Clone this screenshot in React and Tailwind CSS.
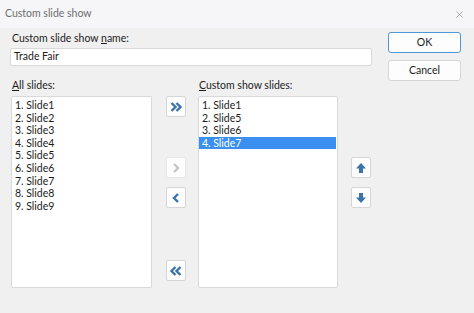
import { X } from 'lucide-react'

const ALL = ['1. Slide1', '2. Slide2', '3. Slide3', '4. Slide4', '5. Slide5', '6. Slide6', '7. Slide7', '8. Slide8', '9. Slide9']
const SHOW = ['1. Slide1', '2. Slide5', '3. Slide6', '4. Slide7']

const font = { fontFamily: 'Lato, "Noto Sans", sans-serif' }

function IconButton({ children, className = '' }) {
  return (
    <div className={`w-[20px] h-[21px] flex items-center justify-center bg-[#fdfdfd] border border-[#d6d6d6] rounded-[2px] ${className}`}>
      {children}
    </div>
  )
}

function Chevron({ dir = 'right', double = false, color = '#3b74aa' }) {
  const flip = dir === 'left' ? 'scale(-1,1) translate(-12,0)' : undefined
  return (
    <svg width="12" height="12" viewBox="0 0 12 12">
      <g transform={flip} fill="none" stroke={color} strokeWidth="2.4" strokeLinejoin="miter" strokeLinecap="butt">
        {double ? (
          <>
            <path d="M1.5 2 L5.5 6 L1.5 10" />
            <path d="M6.5 2 L10.5 6 L6.5 10" />
          </>
        ) : (
          <path d="M4 2 L8 6 L4 10" />
        )}
      </g>
    </svg>
  )
}

function Arrow({ down = false }) {
  return (
    <svg width="12" height="12" viewBox="0 0 12 12" style={down ? { transform: 'rotate(180deg)' } : undefined}>
      <path d="M6 1 L11 6.5 H8 V11 H4 V6.5 H1 Z" fill="#3b74aa" />
    </svg>
  )
}

function ListBox({ items, selected, width }) {
  return (
    <div className={`${width} h-[192px] bg-white border border-[#d9d9d9] rounded-[2px] pt-[2px]`}>
      {items.map((it, i) => (
        <div
          key={it}
          className={`h-[12.6px] leading-[12.6px] pl-[3px] mr-[1px] text-[10.5px] ${i === selected ? 'bg-[#3a8ff0] text-white' : 'text-[#1c1c1c]'}`}
        >
          {it}
        </div>
      ))}
    </div>
  )
}

export default function App() {
  return (
    <div className="w-[474px] h-[313px] bg-[#f0f0f0] overflow-hidden" style={font}>
      {/* title bar */}
      <div className="h-[28px] flex items-center justify-between pl-[5px] pr-[9px] bg-[#f6f6f8]">
        <span className="text-[10.5px] text-[#6e6e6e]">Custom slide show</span>
        <X size={11} strokeWidth={1.3} className="text-[#777]" />
      </div>

      <div className="flex pl-[10px] gap-[16px]">
        {/* left column */}
        <div className="w-[362px]">
          <div className="mt-[3px] h-[14px] leading-[14px] text-[10.5px] text-[#1c1c1c] pl-[2px]">
            Custom slide show <span className="underline">n</span>ame:
          </div>
          <div className="mt-[3px] h-[18px] bg-white border border-[#d9d9d9] rounded-[2px] flex items-center pl-[3px] text-[10.5px] text-[#1c1c1c]">
            Trade Fair
          </div>

          <div className="flex mt-[12px] h-[14px] leading-[14px] text-[10.5px] text-[#1c1c1c]">
            <div className="w-[189px] pl-[2px]"><span className="underline">A</span>ll slides:</div>
            <div><span className="underline">C</span>ustom show slides:</div>
          </div>

          <div className="flex mt-[4px] ml-[1px]">
            <ListBox items={ALL} width="w-[141px]" />
            <div className="ml-[14px] flex flex-col">
              <IconButton><Chevron double /></IconButton>
              <IconButton className="mt-[40px] border-[#e6e6e6]"><Chevron color="#c4c4c4" /></IconButton>
              <IconButton className="mt-[9px]"><Chevron dir="left" /></IconButton>
              <IconButton className="mt-[52px]"><Chevron dir="left" double /></IconButton>
            </div>
            <div className="ml-[12px]">
              <ListBox items={SHOW} selected={3} width="w-[140px]" />
            </div>
            <div className="ml-[13px] flex flex-col">
              <IconButton className="mt-[61px]"><Arrow /></IconButton>
              <IconButton className="mt-[9px]"><Arrow down /></IconButton>
            </div>
          </div>
        </div>

        {/* right column */}
        <div className="w-[73px] flex flex-col mt-[4px]">
          <div className="h-[21px] flex items-center justify-center text-[10.5px] text-[#1c1c1c] bg-[#fdfdfd] border border-[#4f97d6] rounded-[3px]">
            OK
          </div>
          <div className="mt-[7px] h-[21px] flex items-center justify-center text-[10.5px] text-[#1c1c1c] bg-[#fdfdfd] border border-[#d6d6d6] rounded-[3px]">
            Cancel
          </div>
        </div>
      </div>
    </div>
  )
}
